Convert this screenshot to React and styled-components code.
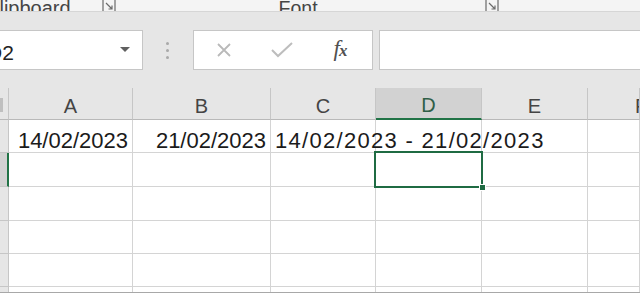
import React from "react";
import styled, { createGlobalStyle } from "styled-components";

const GlobalStyle = createGlobalStyle`
  html, body { margin: 0; padding: 0; background: #ffffff; }
  body { width: 640px; height: 293px; overflow: hidden; }
  * { box-sizing: border-box; }
`;

const Page = styled.div`
  width: 640px;
  height: 293px;
  overflow: hidden;
  display: flex;
  flex-direction: column;
  font-family: "Liberation Sans", Arial, sans-serif;
  background: #ffffff;
  border-bottom: 1px solid #a8a8a8;
`;

const Ribbon = styled.div`
  height: 12px;
  flex: none;
  background: #f4f4f4;
  border-bottom: 1px solid #d6d6d6;
  display: flex;
  align-items: flex-end;
  overflow: hidden;
`;

const RibbonLabel = styled.span`
  font-size: ${(p) => p.$size}px;
  line-height: 20px;
  color: #454545;
  white-space: nowrap;
  margin-left: ${(p) => p.$ml}px;
  margin-bottom: -7px;
`;

const Launcher = styled.svg`
  width: 16px;
  height: 16px;
  flex: none;
  margin-left: ${(p) => p.$ml}px;
  margin-bottom: -5px;
`;

const FormulaBar = styled.div`
  height: 76px;
  flex: none;
  background: #e6e6e6;
  padding: 18px 0 18px 0;
  display: flex;
  align-items: stretch;
`;

const WhiteBox = styled.div`
  background: #ffffff;
  border: 1px solid #c6c6c6;
  display: flex;
  align-items: center;
  overflow: hidden;
  position: relative;
  flex: none;
  width: ${(p) => p.$w}px;
  margin-left: ${(p) => p.$ml}px;
`;

const NameText = styled.span`
  font-size: 21px;
  line-height: 21px;
  color: #222;
  margin-left: -13px;
  margin-top: 4px;
  white-space: nowrap;
`;

const DropArrow = styled.div`
  position: absolute;
  right: 12px;
  top: 16px;
  width: 0;
  height: 0;
  border-left: 5px solid transparent;
  border-right: 5px solid transparent;
  border-top: 5px solid #606060;
`;

const Dots = styled.div`
  width: 3px;
  margin-left: 23px;
  display: flex;
  flex-direction: column;
  justify-content: center;
  gap: 4px;
  flex: none;
  & > span {
    width: 3px;
    height: 3px;
    border-radius: 50%;
    background: #a9a9a9;
  }
`;

const FxGroup = styled(WhiteBox)`
  justify-content: flex-start;
  padding-left: 21px;
`;

const IconSlot = styled.div`
  width: ${(p) => p.$w}px;
  margin-left: ${(p) => p.$ml || 0}px;
  display: flex;
  align-items: center;
  justify-content: center;
  flex: none;
`;

const Fx = styled.span`
  font-family: "Liberation Serif", "Times New Roman", serif;
  font-style: italic;
  font-size: 23px;
  color: #505050;
  letter-spacing: -1px;
  line-height: 22px;
  & > small {
    font-size: 17px;
    font-weight: bold;
  }
`;

const Grid = styled.div`
  flex: 1;
  display: grid;
  grid-template-columns: 9px 124px 138px 105px 106px 106px 1fr;
  grid-template-rows: 32px 33px 34px 34px 33px 33px 1fr;
  overflow: hidden;
`;

const Corner = styled.div`
  background: #e6e6e6;
  border-right: 1px solid #c6c6c6;
  border-bottom: 1px solid #b9b9b9;
  display: flex;
  align-items: flex-end;
  padding-bottom: 7px;
  & > span {
    width: 3px;
    height: 14px;
    background: #bfbfbf;
  }
`;

const ColHeader = styled.div`
  background: ${(p) => (p.$sel ? "#d2d2d2" : "#e6e6e6")};
  border-right: 1px solid #c6c6c6;
  border-bottom: ${(p) => (p.$sel ? "2px solid #217346" : "1px solid #b9b9b9")};
  display: flex;
  align-items: center;
  justify-content: center;
  padding-top: 4px;
  font-size: 20px;
  line-height: 20px;
  color: ${(p) => (p.$sel ? "#2f5f47" : "#444")};
  overflow: hidden;
  white-space: nowrap;
  ${(p) => p.$cut && "justify-content: flex-start; padding-left: 47px;"}
`;

const RowHeader = styled.div`
  background: ${(p) => (p.$sel ? "#d2d2d2" : "#e6e6e6")};
  border-right: ${(p) => (p.$sel ? "2px solid #217346" : "1px solid #c6c6c6")};
  border-bottom: 1px solid #c6c6c6;
`;

const Cell = styled.div`
  position: relative;
  border-right: 1px solid #d4d4d4;
  border-bottom: 1px solid #d4d4d4;
  display: flex;
  align-items: flex-start;
  justify-content: ${(p) => (p.$right ? "flex-end" : "flex-start")};
  padding: 10px 4px 0 4px;
  white-space: nowrap;
  overflow: visible;
  font-size: 22px;
  line-height: 22px;
  color: #1b1b1b;
  z-index: ${(p) => (p.$front ? 2 : 1)};
`;

const Value = styled.span`
  letter-spacing: ${(p) => p.$ls || 0}px;
`;

const Selection = styled.div`
  position: absolute;
  left: -2px;
  top: -2px;
  right: -2px;
  bottom: -2px;
  border: 2px solid #1f6b43;
  pointer-events: none;
  z-index: 3;
`;

const FillHandle = styled.div`
  position: absolute;
  right: -5px;
  bottom: -5px;
  width: 7px;
  height: 7px;
  background: #1f6b43;
  border: 1px solid #ffffff;
  z-index: 4;
`;

const cols = ["A", "B", "C", "D", "E", "F"];

function LauncherIcon({ ml }) {
  return (
    <Launcher $ml={ml} viewBox="0 0 16 16">
      <path d="M2 0 V13 H14 V0" fill="none" stroke="#6a6a6a" strokeWidth="1.2" />
      <path d="M5 3 L11 9 M11 5.5 V9 H7.5" fill="none" stroke="#6a6a6a" strokeWidth="1.2" />
    </Launcher>
  );
}

export default function App() {
  const rows = [1, 2, 3, 4, 5, 6];
  return (
    <>
      <GlobalStyle />
      <Page>
        <Ribbon>
          <RibbonLabel $size={20} $ml={-15}>Clipboard</RibbonLabel>
          <LauncherIcon ml={30} />
          <RibbonLabel $size={19.5} $ml={162}>Font</RibbonLabel>
          <LauncherIcon ml={166} />
        </Ribbon>
        <FormulaBar>
          <WhiteBox $w={144} $ml={-1}>
            <NameText>D2</NameText>
            <DropArrow />
          </WhiteBox>
          <Dots>
            <span />
            <span />
            <span />
          </Dots>
          <FxGroup $w={180} $ml={24}>
            <IconSlot $w={18}>
              <svg width="16" height="16" viewBox="0 0 16 16">
                <path d="M2 2 L14 14 M14 2 L2 14" stroke="#b9b9b9" strokeWidth="1.8" fill="none" />
              </svg>
            </IconSlot>
            <IconSlot $w={22} $ml={38}>
              <svg width="22" height="16" viewBox="0 0 22 16">
                <path d="M1 8 L7 14 L21 1" stroke="#bdbdbd" strokeWidth="2" fill="none" />
              </svg>
            </IconSlot>
            <IconSlot $w={22} $ml={36}>
              <Fx>
                f<small>x</small>
              </Fx>
            </IconSlot>
          </FxGroup>
          <WhiteBox $w={270} $ml={6} />
        </FormulaBar>
        <Grid>
          <Corner>
            <span />
          </Corner>
          {cols.map((c) => (
            <ColHeader key={c} $sel={c === "D"} $cut={c === "F"}>
              {c}
            </ColHeader>
          ))}
          {rows.map((r) => (
            <React.Fragment key={r}>
              <RowHeader $sel={r === 2} />
              {cols.map((c) => {
                let content = null;
                let right = false;
                let front = false;
                if (r === 1 && c === "A") {
                  content = <Value>14/02/2023</Value>;
                  right = true;
                } else if (r === 1 && c === "B") {
                  content = <Value>21/02/2023</Value>;
                  right = true;
                } else if (r === 1 && c === "C") {
                  content = <Value $ls={1.3}>14/02/2023 - 21/02/2023</Value>;
                  front = true;
                }
                const selected = r === 2 && c === "D";
                return (
                  <Cell key={c} $right={right} $front={front || selected}>
                    {content}
                    {selected && (
                      <Selection>
                        <FillHandle />
                      </Selection>
                    )}
                  </Cell>
                );
              })}
            </React.Fragment>
          ))}
        </Grid>
      </Page>
    </>
  );
}
